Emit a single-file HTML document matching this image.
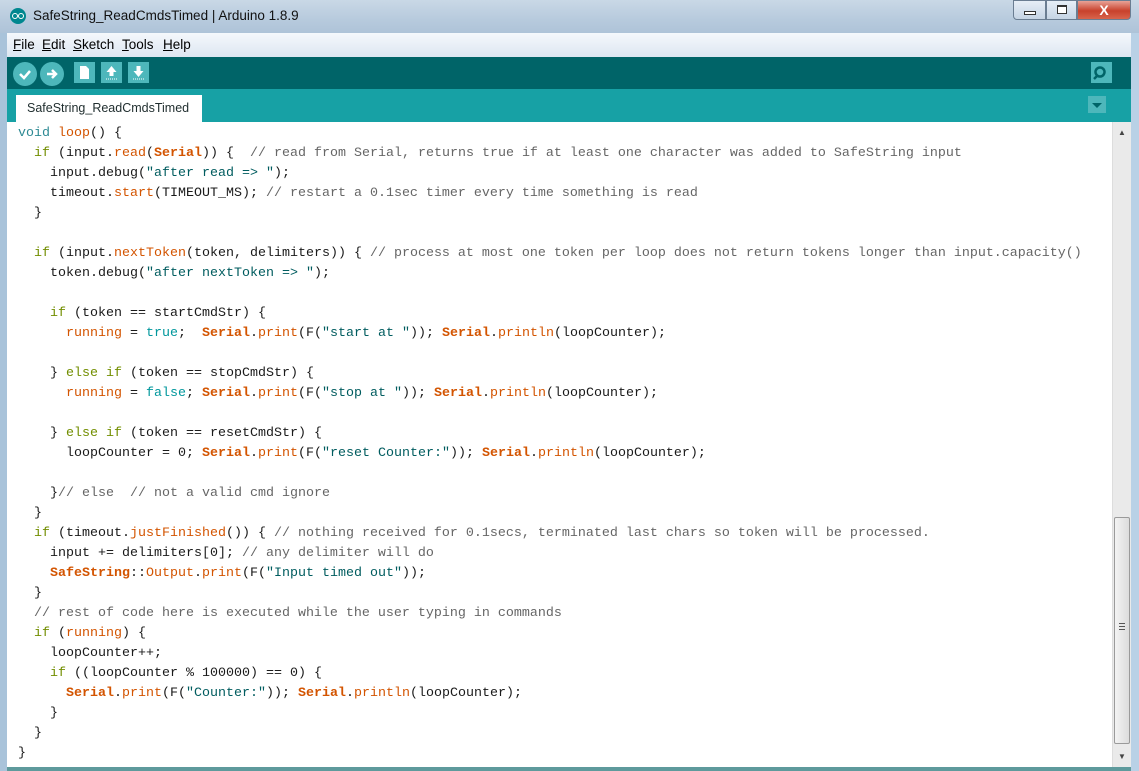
<!DOCTYPE html>
<html><head><meta charset="utf-8"><style>
*{margin:0;padding:0;box-sizing:border-box}
body{width:1139px;height:771px;overflow:hidden;background:#a9c3da;font-family:"Liberation Sans",sans-serif;position:relative}
#title{position:absolute;left:0;top:0;width:1139px;height:33px;background:linear-gradient(#c9d8e6,#b7cadd 60%,#aec3d8);}
#title .t{position:absolute;left:33px;top:8px;font-size:13.5px;color:#111}
#logo{position:absolute;left:10px;top:8px;width:16px;height:16px;border-radius:50%;background:#00878f}
#logo:before{content:"";position:absolute;left:2px;top:5px;width:4px;height:4px;border:1.5px solid #fff;border-radius:50%}
#logo:after{content:"";position:absolute;left:8px;top:5px;width:4px;height:4px;border:1.5px solid #fff;border-radius:50%}
.wb{position:absolute;top:0;height:20px;border:1px solid #6a7d92;}
#menu{position:absolute;left:7px;top:33px;width:1124px;height:24px;background:linear-gradient(#f5f8fc,#dde6f1);font-size:13.5px;color:#000}
#menu span{position:absolute;top:4px}
#menu u{text-decoration:underline}
#tool{position:absolute;left:7px;top:57px;width:1124px;height:32px;background:#006468}
.cb{position:absolute;top:5px;width:24px;height:24px;border-radius:50%;background:#4db7bb}
.sb{position:absolute;top:5px;width:21px;height:21px;background:#4db7bb}
#tabs{position:absolute;left:7px;top:89px;width:1124px;height:33px;background:#17a1a5}
#tab{position:absolute;left:9px;top:6px;width:186px;height:27px;background:#fff;font-size:12.5px;color:#1f2d2e;padding:6px 0 0 11px}
#ed{position:absolute;left:7px;top:122px;width:1105px;height:645px;background:#fff}
#scroll{position:absolute;left:1112px;top:122px;width:19px;height:645px;background:#eaeaea;border-left:1px solid #ddd}
#thumb{position:absolute;left:1px;top:395px;width:16px;height:227px;background:linear-gradient(90deg,#f3f3f3,#dcdcdc);border:1px solid #9a9a9a;border-radius:2px}
#rb{position:absolute;left:1131px;top:33px;width:8px;height:738px;background:#b9d1e6}
#bot{position:absolute;left:7px;top:767px;width:1124px;height:4px;background:#5e9a9c}
pre{position:absolute;left:18px;top:124px;font-family:"Liberation Mono","Courier New",monospace;font-size:13.33px;line-height:20px;color:#1a1a1a}
.k{color:#728e00}.v{color:#2e8a94}.f{color:#d35400}.b{color:#d35400;font-weight:bold}.s{color:#005c5f}.c{color:#666}.l{color:#00979c}
</style></head><body>
<div id="title"><div id="logo"></div><div class="t">SafeString_ReadCmdsTimed | Arduino 1.8.9</div>
<div class="wb" style="left:1013px;width:33px;background:linear-gradient(#e6eef7,#c5d4e4);border-radius:0 0 0 4px"><div style="position:absolute;left:10px;top:10px;width:12px;height:4px;border:1px solid #333;background:#fff"></div></div>
<div class="wb" style="left:1046px;width:31px;background:linear-gradient(#e6eef7,#c5d4e4)"><div style="position:absolute;left:10px;top:4px;width:10px;height:9px;border:1px solid #333;border-top-width:2px;background:#fff"></div></div>
<div class="wb" style="left:1077px;width:54px;background:linear-gradient(#e8a397,#c8412c 55%,#d8644c);border-radius:0 0 4px 0;color:#fff;font-weight:bold;font-size:14px;text-align:center;line-height:18px">X</div>
</div>
<div id="rb"></div>
<div id="menu"><span style="left:6px"><u>F</u>ile</span><span style="left:35px"><u>E</u>dit</span><span style="left:66px"><u>S</u>ketch</span><span style="left:115px"><u>T</u>ools</span><span style="left:156px"><u>H</u>elp</span></div>
<div id="tool">
<div class="cb" style="left:6px"><svg width="24" height="24"><path d="M7 12l4 4 6-7" stroke="#fff" stroke-width="2.5" fill="none"/></svg></div>
<div class="cb" style="left:33px"><svg width="24" height="24"><path d="M7 12h9M12 8l4 4-4 4" stroke="#fff" stroke-width="2.5" fill="none"/></svg></div>
<div class="sb" style="left:67px"><svg width="21" height="21"><path d="M6 4h6l3 3v10H6z" fill="#fff"/></svg></div>
<div class="sb" style="left:94px"><svg width="21" height="21"><path d="M10.5 4l-5 6h3v4h4v-4h3z" fill="#fff"/><path d="M5 17h11" stroke="#fff" stroke-dasharray="1 1"/></svg></div>
<div class="sb" style="left:121px"><svg width="21" height="21"><path d="M10.5 15l-5-6h3V4h4v5h3z" fill="#fff"/><path d="M5 17h11" stroke="#fff" stroke-dasharray="1 1"/></svg></div>
<div class="sb" style="left:1084px"><svg width="21" height="21"><circle cx="9" cy="10" r="4.5" stroke="#006468" stroke-width="2.5" fill="none"/><path d="M6 14l-3 3" stroke="#006468" stroke-width="2.5"/></svg></div>
</div>
<div id="tabs"><div id="tab">SafeString_ReadCmdsTimed</div>
<div style="position:absolute;left:1081px;top:7px;width:18px;height:17px;background:#4db7bb"><svg width="18" height="17"><path d="M4 7h10l-5 5z" fill="#006468"/></svg></div></div>
<div id="ed"></div>
<div id="scroll"><div style="position:absolute;left:5px;top:6px;font-size:8px;color:#444">▲</div><div id="thumb"><div style="position:absolute;left:4px;top:105px;width:6px;height:7px;border-top:1px solid #555;border-bottom:1px solid #555"><div style="margin-top:2px;border-top:1px solid #555"></div></div></div><div style="position:absolute;left:5px;top:630px;font-size:8px;color:#444">▼</div></div>
<div id="bot"></div>
<pre><span class="v">void</span> <span class="f">loop</span>() {
  <span class="k">if</span> (input.<span class="f">read</span>(<span class="b">Serial</span>)) {  <span class="c">// read from Serial, returns true if at least one character was added to SafeString input</span>
    input.debug(<span class="s">"after read =&gt; "</span>);
    timeout.<span class="f">start</span>(TIMEOUT_MS); <span class="c">// restart a 0.1sec timer every time something is read</span>
  }

  <span class="k">if</span> (input.<span class="f">nextToken</span>(token, delimiters)) { <span class="c">// process at most one token per loop does not return tokens longer than input.capacity()</span>
    token.debug(<span class="s">"after nextToken =&gt; "</span>);

    <span class="k">if</span> (token == startCmdStr) {
      <span class="f">running</span> = <span class="l">true</span>;  <span class="b">Serial</span>.<span class="f">print</span>(F(<span class="s">"start at "</span>)); <span class="b">Serial</span>.<span class="f">println</span>(loopCounter);

    } <span class="k">else</span> <span class="k">if</span> (token == stopCmdStr) {
      <span class="f">running</span> = <span class="l">false</span>; <span class="b">Serial</span>.<span class="f">print</span>(F(<span class="s">"stop at "</span>)); <span class="b">Serial</span>.<span class="f">println</span>(loopCounter);

    } <span class="k">else</span> <span class="k">if</span> (token == resetCmdStr) {
      loopCounter = 0; <span class="b">Serial</span>.<span class="f">print</span>(F(<span class="s">"reset Counter:"</span>)); <span class="b">Serial</span>.<span class="f">println</span>(loopCounter);

    }<span class="c">// else  // not a valid cmd ignore</span>
  }
  <span class="k">if</span> (timeout.<span class="f">justFinished</span>()) { <span class="c">// nothing received for 0.1secs, terminated last chars so token will be processed.</span>
    input += delimiters[0]; <span class="c">// any delimiter will do</span>
    <span class="b">SafeString</span>::<span class="f">Output</span>.<span class="f">print</span>(F(<span class="s">"Input timed out"</span>));
  }
  <span class="c">// rest of code here is executed while the user typing in commands</span>
  <span class="k">if</span> (<span class="f">running</span>) {
    loopCounter++;
    <span class="k">if</span> ((loopCounter % 100000) == 0) {
      <span class="b">Serial</span>.<span class="f">print</span>(F(<span class="s">"Counter:"</span>)); <span class="b">Serial</span>.<span class="f">println</span>(loopCounter);
    }
  }
}</pre>
</body></html>
